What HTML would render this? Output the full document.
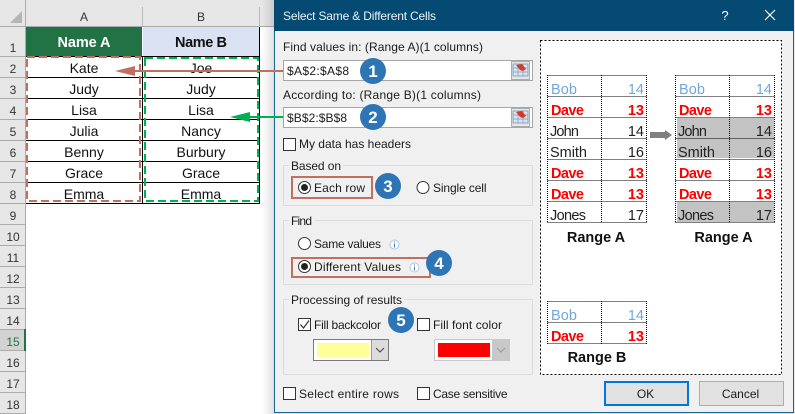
<!DOCTYPE html>
<html><head><meta charset="utf-8"><style>
html,body{margin:0;padding:0;background:#fff;overflow:hidden}
svg{display:block}
text{font-family:"Liberation Sans",sans-serif;font-size:12px;fill:#1a1a1a}
.x{font-size:14px;fill:#111;text-anchor:middle}
.h{font-size:12px;fill:#333;text-anchor:middle}
.n{font-size:14.5px;fill:#222}
.r{text-anchor:end}
.bl{fill:#6fa8dc}
.rd{fill:#ff0000;font-weight:bold}
.t{font-size:14.5px;font-weight:bold;fill:#111;text-anchor:middle}
.c{font-size:14.5px;font-weight:bold;fill:#fff;text-anchor:middle}
.box{fill:#fff;stroke:#333;stroke-width:1}
.rad{fill:#fff;stroke:#333;stroke-width:1}
.gp{fill:none;stroke:#dcdcdc;stroke-width:1}
.rb{fill:none;stroke:#c07060;stroke-width:2}
.dt{stroke:#000;stroke-width:1;stroke-dasharray:1 1;fill:none}
</style></head><body>
<svg width="795" height="414" viewBox="0 0 795 414" xmlns="http://www.w3.org/2000/svg">
<defs><linearGradient id="s" x1="0" x2="1" y1="0" y2="0"><stop offset="0" stop-color="#000" stop-opacity="0"/><stop offset="1" stop-color="#000" stop-opacity=".12"/></linearGradient></defs>
<rect width="795" height="414" fill="#fff"/>
<rect x="794" y="0" width="1" height="414" fill="#e8e8e8"/>
<rect x="274" y="413" width="521" height="1" fill="#dcdcdc"/>
<!-- headers -->
<rect x="0" y="0" width="274" height="26" fill="#e6e6e6"/>
<rect x="0" y="0" width="25" height="414" fill="#e6e6e6"/>
<rect x="0" y="26" width="274" height="1" fill="#ababab"/>
<rect x="25" y="0" width="1" height="414" fill="#ababab"/>
<rect x="142" y="7" width="1" height="19" fill="#bbb"/>
<rect x="259" y="7" width="1" height="19" fill="#bbb"/>
<polygon points="10,23 22,23 22,11" fill="#b5b5b5"/>
<text class="h" x="84" y="21">A</text>
<text class="h" x="201" y="21">B</text>
<g fill="#ababab">
<rect x="0" y="56" width="25" height="1"/><rect x="0" y="77" width="25" height="1"/><rect x="0" y="98" width="25" height="1"/><rect x="0" y="119" width="25" height="1"/><rect x="0" y="140" width="25" height="1"/><rect x="0" y="161" width="25" height="1"/><rect x="0" y="182" width="25" height="1"/><rect x="0" y="203" width="25" height="1"/><rect x="0" y="224" width="25" height="1"/><rect x="0" y="245" width="25" height="1"/><rect x="0" y="266" width="25" height="1"/><rect x="0" y="287" width="25" height="1"/><rect x="0" y="308" width="25" height="1"/><rect x="0" y="329" width="25" height="1"/><rect x="0" y="350" width="25" height="1"/><rect x="0" y="371" width="25" height="1"/><rect x="0" y="392" width="25" height="1"/><rect x="0" y="413" width="25" height="1"/>
</g>
<rect x="0" y="330" width="24" height="20" fill="#d2d2d2"/>
<rect x="24" y="329" width="2" height="22" fill="#217346"/>
<g class="row">
<text class="h" x="13" y="52">1</text><text class="h" x="13" y="73">2</text><text class="h" x="13" y="94">3</text><text class="h" x="13" y="115">4</text><text class="h" x="13" y="136">5</text><text class="h" x="13" y="157">6</text><text class="h" x="13" y="178">7</text><text class="h" x="13" y="199">8</text><text class="h" x="13" y="220">9</text><text class="h" x="13" y="241">10</text><text class="h" x="13" y="262">11</text><text class="h" x="13" y="283">12</text><text class="h" x="13" y="304">13</text><text class="h" x="13" y="325">14</text><text class="h" x="13" y="346" style="fill:#217346">15</text><text class="h" x="13" y="367">16</text><text class="h" x="13" y="388">17</text><text class="h" x="13" y="409">18</text>
</g>
<!-- table -->
<rect x="26" y="27" width="116" height="29" fill="#217346"/>
<rect x="143" y="27" width="116" height="29" fill="#d9e1f2"/>
<g fill="#000">
<rect x="26" y="56" width="234" height="1"/><rect x="26" y="77" width="234" height="1"/><rect x="26" y="98" width="234" height="1"/><rect x="26" y="119" width="234" height="1"/><rect x="26" y="140" width="234" height="1"/><rect x="26" y="161" width="234" height="1"/><rect x="26" y="182" width="234" height="1"/><rect x="26" y="203" width="234" height="1"/>
<rect x="142" y="56" width="1" height="148"/><rect x="259" y="27" width="1" height="177"/>
</g>
<text class="c" x="84" y="47" textLength="53">Name A</text>
<text class="c" x="201" y="47" textLength="52" style="fill:#111">Name B</text>
<text class="x" x="84" y="73">Kate</text><text class="x" x="84" y="94">Judy</text><text class="x" x="84" y="115">Lisa</text><text class="x" x="84" y="136">Julia</text><text class="x" x="84" y="157">Benny</text><text class="x" x="84" y="178">Grace</text><text class="x" x="84" y="199">Emma</text>
<text class="x" x="201" y="73">Joe</text><text class="x" x="201" y="94">Judy</text><text class="x" x="201" y="115">Lisa</text><text class="x" x="201" y="136">Nancy</text><text class="x" x="201" y="157">Burbury</text><text class="x" x="201" y="178">Grace</text><text class="x" x="201" y="199">Emma</text>
<rect x="27" y="57" width="113" height="144" fill="none" stroke="#c07060" stroke-width="2" stroke-dasharray="8 4"/>
<rect x="145" y="58" width="113" height="143" fill="none" stroke="#00b050" stroke-width="2" stroke-dasharray="8 4"/>
<rect x="262" y="0" width="12" height="414" fill="url(#s)"/>
<!-- dialog -->
<rect x="274" y="0" width="520" height="413" fill="#f0f0f0"/>
<rect x="274.5" y="0.5" width="519" height="412" fill="none" stroke="#1c6591"/>
<rect x="274" y="0" width="520" height="31" fill="#044a73"/>
<text x="283" y="20" textLength="153" style="fill:#eef3f6">Select Same &amp; Different Cells</text>
<text x="725" y="20" style="fill:#fff;font-size:13px;text-anchor:middle">?</text>
<path d="M765 10L775 20M775 10L765 20" stroke="#fff" stroke-width="1.2" fill="none"/>
<!-- fields -->
<text x="283" y="51" textLength="200">Find values in: (Range A)(1 columns)</text>
<rect x="283.5" y="60.5" width="249" height="20" fill="#fff" stroke="#a6a6a6"/>
<text x="287" y="75" textLength="62">$A$2:$A$8</text>
<text x="283" y="99" textLength="198">According to: (Range B)(1 columns)</text>
<rect x="283.5" y="107.5" width="249" height="20" fill="#fff" stroke="#a6a6a6"/>
<text x="287" y="122" textLength="60">$B$2:$B$8</text>
<g id="ic"><rect x="511.5" y="61.5" width="18" height="18" fill="#e6e6e6" stroke="#adadad"/><rect x="513" y="64" width="15" height="12" fill="#d6e4f2" stroke="#6d8bb0" stroke-width=".7"/><path d="M513 68H528M513 72H528M518 64V76M523 64V76" stroke="#7f9bbd" stroke-width=".7"/><path d="M516 65L522 64L526 69L523 71L520 70Z" fill="#d8382a"/></g>
<g transform="translate(0,47)"><rect x="511.5" y="61.5" width="18" height="18" fill="#e6e6e6" stroke="#adadad"/><rect x="513" y="64" width="15" height="12" fill="#d6e4f2" stroke="#6d8bb0" stroke-width=".7"/><path d="M513 68H528M513 72H528M518 64V76M523 64V76" stroke="#7f9bbd" stroke-width=".7"/><path d="M516 65L522 64L526 69L523 71L520 70Z" fill="#d8382a"/></g>
<rect x="283.5" y="138.5" width="12" height="12" class="box"/>
<text x="299" y="148" textLength="112">My data has headers</text>
<!-- based on -->
<rect x="283.5" y="165.5" width="249" height="40" class="gp"/>
<rect x="289" y="160" width="54" height="12" fill="#f0f0f0"/>
<text x="291" y="170" textLength="50">Based on</text>
<rect x="292" y="177" width="80" height="21" class="rb"/>
<circle cx="304.5" cy="187.5" r="6" class="rad"/><circle cx="304.5" cy="187.5" r="3.5" fill="#222"/>
<text x="314" y="192" textLength="51">Each row</text>
<circle cx="423" cy="187.5" r="6" class="rad"/>
<text x="433" y="192" textLength="53.5">Single cell</text>
<!-- find -->
<rect x="283.5" y="220.5" width="249" height="64" class="gp"/>
<rect x="289" y="215" width="26" height="12" fill="#f0f0f0"/>
<text x="291" y="225" textLength="21">Find</text>
<circle cx="304.5" cy="243.5" r="6" class="rad"/>
<text x="314" y="248" textLength="67">Same values</text>
<rect x="292" y="258" width="138" height="19" class="rb"/>
<circle cx="304.5" cy="266.5" r="6" class="rad"/><circle cx="304.5" cy="266.5" r="3.5" fill="#222"/>
<text x="314" y="271" textLength="87">Different Values</text>
<circle cx="394.5" cy="244.5" r="4.5" fill="#fff" stroke="#a9c8ea"/><path d="M394.5 243.5V247.5M394.5 241.5V242.5" stroke="#4a7fb5"/>
<circle cx="414.5" cy="267.5" r="4.5" fill="#fff" stroke="#a9c8ea"/><path d="M414.5 266.5V270.5M414.5 264.5V265.5" stroke="#4a7fb5"/>
<!-- processing -->
<rect x="283.5" y="299.5" width="249" height="75" class="gp"/>
<rect x="289" y="294" width="115" height="12" fill="#f0f0f0"/>
<text x="291" y="304" textLength="111">Processing of results</text>
<rect x="298.5" y="318.5" width="12" height="12" class="box"/>
<path d="M300.5 324.5L303.5 328L309 320.5" stroke="#333" stroke-width="1.2" fill="none"/>
<text x="314" y="329" textLength="67">Fill backcolor</text>
<rect x="417.5" y="318.5" width="12" height="12" class="box"/>
<text x="433" y="329" textLength="69">Fill font color</text>
<rect x="313.5" y="339.5" width="75" height="21" fill="#fff" stroke="#7a7a7a"/>
<rect x="317" y="343" width="52" height="14" fill="#ffff99"/>
<rect x="372" y="340" width="16" height="20" fill="#dcdcdc"/><rect x="371" y="340" width="1" height="20" fill="#9a9a9a"/>
<path d="M376 348L380 352L384 348" stroke="#444" fill="none"/>
<rect x="434.5" y="339.5" width="75" height="21" fill="#fff" stroke="#c8c8c8"/>
<rect x="438" y="343" width="52" height="14" fill="#ff0000"/>
<rect x="492" y="339" width="18" height="22" fill="#c8c8c8"/>
<path d="M497 348L501 352L505 348" stroke="#9a9a9a" fill="none"/>
<!-- bottom -->
<rect x="283.5" y="387.5" width="12" height="12" class="box"/>
<text x="299" y="398" textLength="100">Select entire rows</text>
<rect x="417.5" y="387.5" width="12" height="12" class="box"/>
<text x="433" y="398" textLength="74.5">Case sensitive</text>
<rect x="605" y="382" width="83" height="23" fill="#e1e1e1" stroke="#0078d7" stroke-width="2"/>
<text x="645.5" y="398" style="text-anchor:middle">OK</text>
<rect x="699.5" y="381.5" width="84" height="24" fill="#e1e1e1" stroke="#adadad"/>
<text x="740.5" y="398" style="text-anchor:middle">Cancel</text>
<!-- preview -->
<rect x="540.5" y="40.5" width="241" height="334" fill="#fff" stroke="#000" stroke-dasharray="2 2"/>
<rect x="677" y="118" width="97" height="40" fill="#c3c3c3"/>
<rect x="677" y="202" width="97" height="20" fill="#c3c3c3"/>
<path class="dt" d="M547.5 75.5H646.5M547.5 96.5H646.5M547.5 117.5H646.5M547.5 138.5H646.5M547.5 159.5H646.5M547.5 180.5H646.5M547.5 201.5H646.5M547.5 222.5H646.5M547.5 75V223M601.5 75V223M646.5 75V223"/>
<path class="dt" d="M675.5 75.5H774.5M675.5 96.5H774.5M675.5 117.5H774.5M675.5 138.5H774.5M675.5 159.5H774.5M675.5 180.5H774.5M675.5 201.5H774.5M675.5 222.5H774.5M675.5 75V223M729.5 75V223M774.5 75V223"/>
<path class="dt" d="M547.5 301.5H646.5M547.5 322.5H646.5M547.5 343.5H646.5M547.5 301V344M601.5 301V344M646.5 301V344"/>
<text class="n bl" x="551" y="94" textLength="26">Bob</text><text class="n bl r" x="644" y="94">14</text>
<text class="n rd" x="551" y="115" textLength="33">Dave</text><text class="n rd r" x="644" y="115">13</text>
<text class="n" x="550" y="136" textLength="29">John</text><text class="n r" x="644" y="136">14</text>
<text class="n" x="550" y="157" textLength="37">Smith</text><text class="n r" x="644" y="157">16</text>
<text class="n rd" x="551" y="178" textLength="33">Dave</text><text class="n rd r" x="644" y="178">13</text>
<text class="n rd" x="551" y="199" textLength="33">Dave</text><text class="n rd r" x="644" y="199">13</text>
<text class="n" x="550" y="220" textLength="36">Jones</text><text class="n r" x="644" y="220">17</text>
<text class="n bl" x="679" y="94" textLength="26">Bob</text><text class="n bl r" x="772" y="94">14</text>
<text class="n rd" x="679" y="115" textLength="33">Dave</text><text class="n rd r" x="772" y="115">13</text>
<text class="n" x="678" y="136" textLength="29">John</text><text class="n r" x="772" y="136">14</text>
<text class="n" x="678" y="157" textLength="37">Smith</text><text class="n r" x="772" y="157">16</text>
<text class="n rd" x="679" y="178" textLength="33">Dave</text><text class="n rd r" x="772" y="178">13</text>
<text class="n rd" x="679" y="199" textLength="33">Dave</text><text class="n rd r" x="772" y="199">13</text>
<text class="n" x="678" y="220" textLength="36">Jones</text><text class="n r" x="772" y="220">17</text>
<text class="n bl" x="551" y="320" textLength="26">Bob</text><text class="n bl r" x="644" y="320">14</text>
<text class="n rd" x="551" y="341" textLength="33">Dave</text><text class="n rd r" x="644" y="341">13</text>
<text class="t" x="596" y="242">Range A</text>
<text class="t" x="723.5" y="242">Range A</text>
<text class="t" x="597" y="362">Range B</text>
<path d="M650 132H665V130L672 135L665 140V138H650Z" fill="#808080"/>
<!-- arrows -->
<rect x="133" y="70" width="150" height="2" fill="#c07060"/>
<polygon points="115,71 135,66 135,76" fill="#c07060"/>
<rect x="248" y="116" width="35" height="2" fill="#00b050"/>
<polygon points="230,117 250,112 250,122" fill="#00b050"/>
<!-- badges -->
<g fill="#2e75b6">
<circle cx="373" cy="71" r="13"/><circle cx="373" cy="117" r="13"/><circle cx="388" cy="186" r="13"/><circle cx="439" cy="263" r="13"/><circle cx="401" cy="320" r="13"/>
</g>
<g>
<text x="373" y="77" style="fill:#fff;font-size:17px;font-weight:bold;text-anchor:middle">1</text>
<text x="373" y="123" style="fill:#fff;font-size:17px;font-weight:bold;text-anchor:middle">2</text>
<text x="388" y="192" style="fill:#fff;font-size:17px;font-weight:bold;text-anchor:middle">3</text>
<text x="439" y="269" style="fill:#fff;font-size:17px;font-weight:bold;text-anchor:middle">4</text>
<text x="401" y="326" style="fill:#fff;font-size:17px;font-weight:bold;text-anchor:middle">5</text>
</g>
</svg>
</body></html>
